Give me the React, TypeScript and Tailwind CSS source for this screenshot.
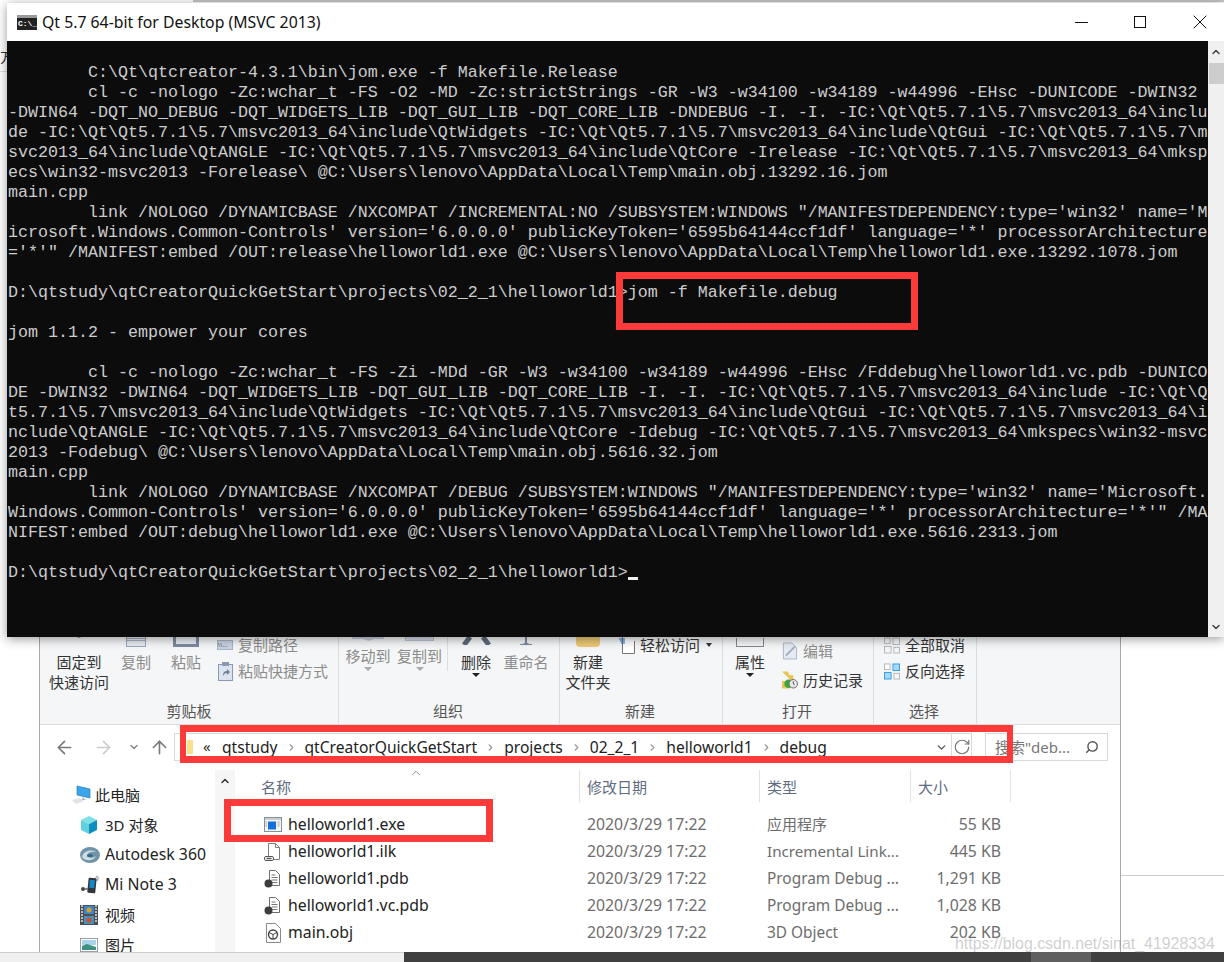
import React from 'react';
import { ChevronDown, ChevronRight, ChevronUp, ArrowLeft, ArrowRight, ArrowUp, RotateCw, Search, Minus, X } from 'lucide-react';

const consoleLines = [
  String.raw`        C:\Qt\qtcreator-4.3.1\bin\jom.exe -f Makefile.Release`,
  String.raw`        cl -c -nologo -Zc:wchar_t -FS -O2 -MD -Zc:strictStrings -GR -W3 -w34100 -w34189 -w44996 -EHsc -DUNICODE -DWIN32`,
  String.raw`-DWIN64 -DQT_NO_DEBUG -DQT_WIDGETS_LIB -DQT_GUI_LIB -DQT_CORE_LIB -DNDEBUG -I. -I. -IC:\Qt\Qt5.7.1\5.7\msvc2013_64\inclu`,
  String.raw`de -IC:\Qt\Qt5.7.1\5.7\msvc2013_64\include\QtWidgets -IC:\Qt\Qt5.7.1\5.7\msvc2013_64\include\QtGui -IC:\Qt\Qt5.7.1\5.7\m`,
  String.raw`svc2013_64\include\QtANGLE -IC:\Qt\Qt5.7.1\5.7\msvc2013_64\include\QtCore -Irelease -IC:\Qt\Qt5.7.1\5.7\msvc2013_64\mksp`,
  String.raw`ecs\win32-msvc2013 -Forelease\ @C:\Users\lenovo\AppData\Local\Temp\main.obj.13292.16.jom`,
  `main.cpp`,
  String.raw`        link /NOLOGO /DYNAMICBASE /NXCOMPAT /INCREMENTAL:NO /SUBSYSTEM:WINDOWS "/MANIFESTDEPENDENCY:type='win32' name='M`,
  String.raw`icrosoft.Windows.Common-Controls' version='6.0.0.0' publicKeyToken='6595b64144ccf1df' language='*' processorArchitecture`,
  String.raw`='*'" /MANIFEST:embed /OUT:release\helloworld1.exe @C:\Users\lenovo\AppData\Local\Temp\helloworld1.exe.13292.1078.jom`,
  ``,
  String.raw`D:\qtstudy\qtCreatorQuickGetStart\projects\02_2_1\helloworld1>jom -f Makefile.debug`,
  ``,
  `jom 1.1.2 - empower your cores`,
  ``,
  String.raw`        cl -c -nologo -Zc:wchar_t -FS -Zi -MDd -GR -W3 -w34100 -w34189 -w44996 -EHsc /Fddebug\helloworld1.vc.pdb -DUNICO`,
  String.raw`DE -DWIN32 -DWIN64 -DQT_WIDGETS_LIB -DQT_GUI_LIB -DQT_CORE_LIB -I. -I. -IC:\Qt\Qt5.7.1\5.7\msvc2013_64\include -IC:\Qt\Q`,
  String.raw`t5.7.1\5.7\msvc2013_64\include\QtWidgets -IC:\Qt\Qt5.7.1\5.7\msvc2013_64\include\QtGui -IC:\Qt\Qt5.7.1\5.7\msvc2013_64\i`,
  String.raw`nclude\QtANGLE -IC:\Qt\Qt5.7.1\5.7\msvc2013_64\include\QtCore -Idebug -IC:\Qt\Qt5.7.1\5.7\msvc2013_64\mkspecs\win32-msvc`,
  String.raw`2013 -Fodebug\ @C:\Users\lenovo\AppData\Local\Temp\main.obj.5616.32.jom`,
  `main.cpp`,
  String.raw`        link /NOLOGO /DYNAMICBASE /NXCOMPAT /DEBUG /SUBSYSTEM:WINDOWS "/MANIFESTDEPENDENCY:type='win32' name='Microsoft.`,
  String.raw`Windows.Common-Controls' version='6.0.0.0' publicKeyToken='6595b64144ccf1df' language='*' processorArchitecture='*'" /MA`,
  String.raw`NIFEST:embed /OUT:debug\helloworld1.exe @C:\Users\lenovo\AppData\Local\Temp\helloworld1.exe.5616.2313.jom`,
  ``,
];

const crumbs = ['qtstudy', 'qtCreatorQuickGetStart', 'projects', '02_2_1', 'helloworld1', 'debug'];

const ExeIcon = () => (
  <svg width="18" height="16" viewBox="0 0 18 16">
    <rect x="0.5" y="0.5" width="17" height="14" fill="#f4f6f8" stroke="#8a8f96" />
    <rect x="1" y="1" width="16" height="2" fill="#c9ced4" />
    <rect x="4" y="4.5" width="8" height="8" fill="#1470d8" />
    <path d="M13.5 5h2M13.5 7h2M13.5 9h2M1.5 5h1.5M1.5 7h1.5M1.5 9h1.5" stroke="#9aa0a8" />
  </svg>
);
const IlkIcon = () => (
  <svg width="18" height="20" viewBox="0 0 18 20">
    <path d="M4.5 1.5h7l4 4v12h-11z" fill="#fff" stroke="#7d7d7d" />
    <path d="M11.5 1.5v4h4" fill="none" stroke="#7d7d7d" />
    <rect x="0.5" y="14.5" width="9" height="4" rx="1.5" fill="#fff" stroke="#555" />
    <path d="M2.5 16.5h5" stroke="#555" strokeWidth="1.5" />
  </svg>
);
const PdbIcon = () => (
  <svg width="18" height="20" viewBox="0 0 18 20">
    <path d="M5.5 1.5h6l4 4v11h-10z" fill="#fff" stroke="#6d6d6d" />
    <path d="M7.5 6h4M7.5 8.5h6M7.5 11h6M7.5 13.5h6" stroke="#777" />
    <circle cx="4.5" cy="14.5" r="4" fill="#3d3d3d" />
  </svg>
);
const ObjIcon = () => (
  <svg width="18" height="20" viewBox="0 0 18 20">
    <path d="M2.5 0.5h9l5 5v14h-14z" fill="#fff" stroke="#8a8a8a" />
    <circle cx="9" cy="11.5" r="4.5" fill="none" stroke="#444" strokeWidth="1.4" />
    <path d="M9 11.5v4M9 11.5l-4-2M9 11.5l4-2" stroke="#444" />
  </svg>
);

const files = [
  { name: 'helloworld1.exe', type: '应用程序', typeSize: 'text-[15px]', size: '55 KB', icon: <ExeIcon /> },
  { name: 'helloworld1.ilk', type: 'Incremental Link...', typeSize: 'text-[15.2px]', size: '445 KB', icon: <IlkIcon /> },
  { name: 'helloworld1.pdb', type: 'Program Debug ...', typeSize: 'text-[15.4px]', size: '1,291 KB', icon: <PdbIcon /> },
  { name: 'helloworld1.vc.pdb', type: 'Program Debug ...', typeSize: 'text-[15.4px]', size: '1,028 KB', icon: <PdbIcon /> },
  { name: 'main.obj', type: '3D Object', typeSize: 'text-[15.4px]', size: '202 KB', icon: <ObjIcon /> },
];

const PcIcon = () => (
  <svg width="20" height="20" viewBox="0 0 20 20">
    <path d="M6 1l13 3v9L6 10z" fill="#3aa6ea" stroke="#2b7fb8" strokeWidth="0.7" />
    <path d="M12 11.5l1 2.5 3 1-5 0z" fill="#9db2c2" />
    <path d="M1 15l8-2 4 3-8 3z" fill="#dfe3e6" />
  </svg>
);
const CubeIcon = () => (
  <svg width="18" height="18" viewBox="0 0 18 18">
    <path d="M9 0l8 4-8 4-8-4z" fill="#7fe0e6" />
    <path d="M1 4l8 4v10l-8-4z" fill="#5fd0dc" />
    <path d="M17 4l-8 4v10l8-4z" fill="#0f8fc0" />
  </svg>
);
const SwirlIcon = () => (
  <svg width="20" height="18" viewBox="0 0 20 18">
    <ellipse cx="10" cy="9" rx="10" ry="8" fill="#6f93a8" />
    <path d="M2 11c1-6 9-8 14-5-4-1-8 0-9 3 0 3 5 4 9 1-2 5-11 6-14 1z" fill="#cfdbe2" />
    <ellipse cx="10" cy="9.5" rx="3" ry="1.6" fill="#2f6a8e" />
  </svg>
);
const PhoneIcon = () => (
  <svg width="20" height="20" viewBox="0 0 20 20">
    <rect x="8" y="3" width="8" height="15" rx="1" transform="rotate(6 12 10)" fill="#30363c" />
    <rect x="9.5" y="5" width="5" height="8" transform="rotate(6 12 10)" fill="#1688c8" />
    <path d="M16 3c0-3 3-2 2 1l-1 2" fill="none" stroke="#8a8a8a" />
    <circle cx="3" cy="14" r="2" fill="#444" />
    <path d="M5 14h3" stroke="#666" strokeWidth="1.5" />
  </svg>
);
const FilmIcon = () => (
  <svg width="18" height="20" viewBox="0 0 18 20">
    <rect width="18" height="20" fill="#4a4f55" />
    <path d="M1 1h2M1 4h2M1 7h2M1 10h2M1 13h2M1 16h2M15 1h2M15 4h2M15 7h2M15 10h2M15 13h2M15 16h2" stroke="#ddd" strokeWidth="1.5" />
    <rect x="4" y="1" width="10" height="8" fill="#3e87c4" />
    <rect x="4" y="11" width="10" height="8" fill="#4a90b0" />
    <circle cx="9" cy="5" r="2.5" fill="#d8a030" />
    <circle cx="9" cy="15" r="2.5" fill="#c8503a" />
  </svg>
);
const PictureIcon = () => (
  <svg width="18" height="14" viewBox="0 0 18 14">
    <rect x="0.5" y="0.5" width="17" height="13" fill="#fff" stroke="#9aa0a6" />
    <rect x="2" y="2" width="14" height="5" fill="#a8d4ea" />
    <path d="M2 8l5-2 9 3v3H2z" fill="#3f8f82" />
  </svg>
);

const navItems = [
  { label: '3D 对象', cls: 'text-[15px]', icon: <CubeIcon /> },
  { label: 'Autodesk 360', cls: 'text-[15.8px]', icon: <SwirlIcon /> },
  { label: 'Mi Note 3', cls: 'text-[15.8px]', icon: <PhoneIcon /> },
  { label: '视频', cls: 'text-[15px]', icon: <FilmIcon /> },
  { label: '图片', cls: 'text-[15px]', icon: <PictureIcon /> },
];

const Group = ({ width, label, labelPad, children }: { width: string; label: string; labelPad?: string; children: React.ReactNode }) => (
  <div className={`${width} h-full shrink-0 flex flex-col border-r border-[#dcdddf]`}>
    <div className="h-[69px] flex">{children}</div>
    <div className={`h-[26px] text-center text-[15px] leading-[26px] text-[#555] ${labelPad ?? ''}`}>{label}</div>
  </div>
);

const BigButton = ({ width, lines, dim, icon, caret }: { width: string; lines: string[]; dim?: boolean; icon?: React.ReactNode; caret?: string }) => (
  <div className={`${width} shrink-0 flex flex-col items-center`}>
    <div className="h-[22px] pb-[5px] w-full flex justify-center items-end">{icon}</div>
    {lines.map(l => (
      <div key={l} className={`h-5 whitespace-nowrap text-[15px] leading-5 ${dim ? 'text-[#8b8b8b]' : 'text-[#333]'}`}>{l}</div>
    ))}
    {caret && <div className={`mt-[1px] h-0 w-0 border-x-[4px] border-t-[4px] border-x-transparent ${caret}`} />}
  </div>
);

const SmallButton = ({ label, dim, icon, caret }: { label: string; dim?: boolean; icon: React.ReactNode; caret?: boolean }) => (
  <div className={`h-5 flex items-center gap-[5px] whitespace-nowrap text-[15px] leading-5 ${dim ? 'text-[#8b8b8b]' : 'text-[#333]'}`}>
    <div className="w-4 flex justify-center">{icon}</div>
    {label}
    {caret && <div className="ml-[1px] h-0 w-0 border-x-[3px] border-t-[4px] border-x-transparent border-t-[#333]" />}
  </div>
);

const Grid4 = ({ on }: { on?: boolean }) => (
  <svg width="17" height="17" viewBox="0 0 17 17">
    <rect x="0.5" y="0.5" width="6" height="6" fill={on ? '#fff' : 'none'} stroke="#b5b5b5" />
    <rect x="9.5" y="0.5" width="7" height="7" fill={on ? '#a8d8f8' : 'none'} stroke={on ? '#2e9be6' : '#b5b5b5'} />
    <rect x="0.5" y="9.5" width="7" height="7" fill={on ? '#a8d8f8' : 'none'} stroke={on ? '#2e9be6' : '#b5b5b5'} />
    <rect x="10.5" y="10.5" width="6" height="6" fill="none" stroke="#b5b5b5" />
  </svg>
);

const Ribbon = () => (
  <div className="h-[95px] shrink-0 flex bg-[#f5f6f7] border-b border-[#dedede] text-[#333]">
    <Group width="w-[299px]" label="剪贴板">
      <BigButton width="w-[78px]" lines={['固定到', '快速访问']} icon={<svg className="mb-[7px]" width="16" height="6"><path d="M2 0l6 3 6-3" fill="none" stroke="#8a8a8a" strokeWidth="2" /></svg>} />
      <BigButton width="w-[36px]" lines={['复制']} dim icon={<div className="w-5 h-[14px] border border-[#9aa8bd] bg-[#e8ecf2]"><div className="mt-[4px] h-[3px] border-y border-[#a7b2c4]" /></div>} />
      <BigButton width="w-[36px] ml-[14px]" lines={['粘贴']} dim icon={<div className="w-[26px] h-[14px] border-x-[3px] border-b-[3px] border-[#7e8ba0] bg-[#e8ecf2]" />} />
      <div className="ml-[13px] pt-[5px] flex flex-col gap-[6px]">
        <SmallButton label="复制路径" dim icon={<div className="w-4 h-[10px] bg-[#c8d3e2] border border-[#a7b4c8] text-[6px] leading-[8px] text-[#556]">\\...</div>} />
        <SmallButton label="粘贴快捷方式" dim icon={<svg width="15" height="19" viewBox="0 0 15 19"><rect x="0.5" y="2.5" width="14" height="16" fill="#dbe3ee" stroke="#8a9ab2" /><rect x="4" y="0" width="7" height="4" fill="#8a9ab2" /><path d="M5 14c0-4 2-5 4-5V7l3 3-3 3v-2c-2 0-3 1-4 3z" fill="#6f7f96" /></svg>} />
      </div>
    </Group>
    <Group width="w-[221px]" label="组织" labelPad="pr-[2px]">
      <div className="w-[109px] shrink-0 flex border-r border-[#dcdddf] h-[41px]">
        <BigButton width="w-[54px] ml-[2px]" lines={['移动到']} dim caret="border-t-[#aaa]" icon={<svg width="32" height="11" viewBox="0 0 32 11"><path d="M0 0h32v9H22l-5 2-6-2H0z" fill="#c3cfde" /></svg>} />
        <BigButton width="w-[49px]" lines={['复制到']} dim caret="border-t-[#aaa]" icon={<div className="w-[29px] h-[11px] bg-[#d3dce8] border border-[#b9c5d6]" />} />
      </div>
      <BigButton width="w-[50px] ml-[3px]" lines={['删除']} caret="border-t-[#222]" icon={<svg className="mb-[2px]" width="31" height="8" viewBox="0 0 31 8"><path d="M3 8l6-8M28 8l-6-8" stroke="#5e6a7c" strokeWidth="5" /></svg>} />
      <BigButton width="w-[44px] ml-[3px]" lines={['重命名']} dim icon={<svg className="mb-[2px]" width="14" height="8" viewBox="0 0 14 8"><path d="M7 0v6M1 8c3 0 6-1 6-3 0 2 3 3 6 3" fill="none" stroke="#7e8ba0" strokeWidth="2" /></svg>} />
    </Group>
    <Group width="w-[163px]" label="新建" labelPad="pr-[2px]">
      <BigButton width="w-[56px]" lines={['新建', '文件夹']} icon={<div className="w-6 h-[11px] bg-[#ecc974] rounded-b-sm" />} />
      <div className="pt-[5px] ml-[3px]">
        <SmallButton label="轻松访问" caret icon={<svg width="16" height="17" viewBox="0 0 16 17"><path d="M3.5 0v16.5h12V4" fill="#fff" stroke="#777" /><path d="M0 2h6M1 4h5M2 6h4" stroke="#1c6fb8" /></svg>} />
      </div>
    </Group>
    <Group width="w-[151px]" label="打开" labelPad="pr-[2px]">
      <BigButton width="w-[54px]" lines={['属性']} caret="border-t-[#222]" icon={<div className="w-7 h-[9px] border-x border-b border-[#888]" />} />
      <div className="pt-[11px] ml-[5px] flex flex-col gap-[9px]">
        <SmallButton label="编辑" dim icon={<svg width="17" height="18" viewBox="0 0 17 18"><path d="M1.5 0.5h9l5 5v12h-14z" fill="#e6ebf3" stroke="#aab6c8" /><path d="M4 14L14 4" stroke="#a0aec2" strokeWidth="2" /></svg>} />
        <SmallButton label="历史记录" icon={<svg width="17" height="18" viewBox="0 0 17 18"><path d="M0 0h6l2 4h4v6H0z M0 0v18h8V8z" fill="#e8c254" /><circle cx="7" cy="13" r="4.5" fill="#3aa53a" /><circle cx="12" cy="13" r="4.5" fill="#e8e8e8" stroke="#666" /><path d="M12 10.5V13l1.5 1" fill="none" stroke="#444" /></svg>} />
      </div>
    </Group>
    <Group width="w-[103px]" label="选择" labelPad="pr-[2px]">
      <div className="pt-[5px] pl-[10px] flex flex-col gap-[6px]">
        <SmallButton label="全部取消" icon={<Grid4 />} />
        <SmallButton label="反向选择" icon={<Grid4 on />} />
      </div>
    </Group>
  </div>
);

const NavBar = () => (
  <div className="h-[45px] shrink-0 flex items-start pt-[8px] bg-white">
    <div className="w-[134px] h-7 shrink-0 flex items-center">
      <ArrowLeft className="ml-[14px] w-[21px] h-[21px] text-[#777]" strokeWidth={1.8} />
      <ArrowRight className="ml-[18px] w-[21px] h-[21px] text-[#ccc]" strokeWidth={1.8} />
      <ChevronDown className="ml-[14px] w-3 h-3 text-[#888]" strokeWidth={3} />
      <ArrowUp className="ml-[9px] w-[21px] h-[21px] text-[#777]" strokeWidth={1.8} />
    </div>
    <div className="w-[798px] h-7 shrink-0 flex items-center border border-[#d9d9d9]">
      <div className="ml-[12px] w-[6px] h-[14px] bg-[#fbe08a]" />
      <div className="ml-[10px] w-[10px] text-[15px] leading-none text-[#333] mb-[2px]">«</div>
      <div className="ml-[9px] mt-[1px] flex items-center text-[15.6px] leading-none text-[#222]">
        {crumbs.map((c, i) => (
          <React.Fragment key={c}>
            {i > 0 && <ChevronRight className="mx-[8px] w-[11px] h-[11px] text-[#999]" strokeWidth={2.5} />}
            <span>{c}</span>
          </React.Fragment>
        ))}
      </div>
      <ChevronDown className="ml-auto w-[13px] h-[13px] text-[#555]" strokeWidth={2.5} />
      <div className="ml-[3px] pl-[1px] h-full flex items-center border-l border-[#d9d9d9]">
        <RotateCw className="w-[18px] h-[18px] text-[#777]" strokeWidth={1.6} />
      </div>
    </div>
    <div className="ml-[13px] w-[123px] h-7 shrink-0 flex items-center border border-[#d9d9d9] pl-[9px] text-[15px] text-[#777] whitespace-nowrap">
      搜索"deb...
      <Search className="ml-auto mr-[8px] w-[14px] h-[14px] -scale-x-100 text-[#555]" strokeWidth={2.4} />
    </div>
  </div>
);

const Sidebar = () => (
  <div className="w-[195px] shrink-0 flex">
    <div className="flex-1 pt-[10px] text-[15px] text-[#222]">
      <div className="h-[30px] pl-[31px] flex items-center gap-[4px]">
        <PcIcon />
        此电脑
      </div>
      {navItems.map(n => (
        <div key={n.label} className={`h-[30px] pl-[40px] flex items-center whitespace-nowrap ${n.cls}`}>
          <div className="w-[25px] flex justify-start">{n.icon}</div>
          {n.label}
        </div>
      ))}
    </div>
    <div className="w-5 bg-[#f6f6f6] flex justify-center pt-[5px]">
      <ChevronUp className="w-3 h-3 text-[#333]" strokeWidth={3} />
    </div>
  </div>
);

const FileList = () => (
  <div className="relative flex-1 min-w-0 text-[15px]">
    <div className="h-[32px] flex text-[#5f6c80]">
      <div className="w-[345px] pl-[26px] pt-[6px] border-r border-[#e2e2e2]">名称</div>
      <div className="w-[180px] pl-[7px] pt-[6px] border-r border-[#e2e2e2]">修改日期</div>
      <div className="w-[151px] pl-[7px] pt-[6px] border-r border-[#e2e2e2]">类型</div>
      <div className="w-[100px] pl-[7px] pt-[6px] border-r border-[#e2e2e2]">大小</div>
    </div>
    <ChevronUp className="absolute left-[174px] top-[-4px] w-[14px] h-[14px] text-[#777]" strokeWidth={1.5} />
    <div className="mt-[9px]">
      {files.map(f => (
        <div key={f.name} className="h-[27px] flex items-center text-[15.8px]">
          <div className="w-[345px] shrink-0 pl-[29px] flex items-center text-[#222]">
            <div className="w-6 flex">{f.icon}</div>
            {f.name}
          </div>
          <div className="w-[180px] shrink-0 pl-[7px] text-[#6d6d6d]">2020/3/29 17:22</div>
          <div className={`w-[151px] shrink-0 pl-[7px] text-[#6d6d6d] whitespace-nowrap ${f.typeSize}`}>{f.type}</div>
          <div className="w-[90px] shrink-0 text-right text-[#6d6d6d]">{f.size}</div>
        </div>
      ))}
    </div>
  </div>
);

const Explorer = () => (
  <div className="absolute left-[39px] top-[630px] w-[1082px] h-[322px] flex flex-col overflow-hidden bg-white border-x border-[#a8a8a8] font-['Noto_Sans','Noto_Sans_CJK_SC',sans-serif]">
    <Ribbon />
    <NavBar />
    <div className="flex flex-1 min-h-0">
      <Sidebar />
      <FileList />
    </div>
  </div>
);

const Terminal = () => (
  <div className="absolute left-[7px] top-[3px] w-[1217px] h-[634px] flex flex-col bg-white shadow-[0_2px_10px_rgba(0,0,0,0.4)]">
    <div className="h-[38px] shrink-0 flex items-center pl-[10px] text-[#111] font-['Noto_Sans','Noto_Sans_CJK_SC',sans-serif]">
      <div className="w-5 h-[15px] bg-[#222] border-t-[3px] border-[#9a9a9a] text-[8px] leading-[12px] text-white font-['Liberation_Mono',monospace] font-bold pl-[1px]">C:\_</div>
      <div className="ml-[5px] mt-[2px] text-[15.8px] leading-none whitespace-nowrap">Qt 5.7 64-bit for Desktop (MSVC 2013)</div>
      <div className="ml-auto flex items-center">
        <Minus className="w-[21px] h-[21px] text-[#111]" strokeWidth={1.2} />
        <div className="ml-[42px] w-3 h-3 border border-[#111]" />
        <X className="ml-[42px] mr-[12px] w-6 h-6 text-[#111]" strokeWidth={1} />
      </div>
    </div>
    <div className="flex-1 min-h-0 flex">
      <div className="flex-1 min-w-0 bg-[#0c0c0c] pl-[1px] pt-[22px] text-[#cccccc] font-['Liberation_Mono',monospace] text-[16.667px] leading-5 whitespace-pre overflow-hidden">
        {consoleLines.map((l, i) => (
          <div key={i} className="h-5">{l}</div>
        ))}
        <div className="h-5 relative">
          {String.raw`D:\qtstudy\qtCreatorQuickGetStart\projects\02_2_1\helloworld1>`}
          <span className="inline-block w-[10px] h-[3px] bg-[#eeeeee] align-[-3px]" />
        </div>
      </div>
      <div className="w-4 shrink-0 bg-[#f0f0f0] flex flex-col items-center">
        <ChevronUp className="mt-[5px] w-3 h-3 text-[#444]" strokeWidth={3} />
        <div className="mt-[5px] w-[15px] h-[21px] bg-[#cdcdcd]" />
        <ChevronDown className="mt-auto mb-[4px] w-3 h-3 text-[#444]" strokeWidth={3} />
      </div>
    </div>
  </div>
);

export default function App() {
  return (
    <div className="relative w-[1224px] h-[962px] overflow-hidden bg-white">
      {/* stuff peeking out behind the two windows */}
      <div className="absolute left-[193px] top-0 right-0 h-[2px] bg-[#c4c4c4]" />
      <div className="absolute left-0 top-[71px] w-[7px] h-px bg-[#dddddd]" />
      <div className="absolute left-0 top-[46px] w-[7px] overflow-hidden text-[15px] leading-5 text-[#333] font-['Noto_Sans_CJK_SC',sans-serif]">方</div>
      <div className="absolute left-[1120px] top-[875px] right-0 h-px bg-[#cccccc]" />

      <Explorer />
      <Terminal />

      {/* bottom strip */}
      <div className="absolute left-0 top-[952px] w-[404px] h-[10px] bg-[#f0f0f0] border-t border-[#cfcfcf]" />
      <div className="absolute left-[404px] top-[952px] right-0 h-[10px] bg-[#404040]">
        <div className="ml-[627px] w-[60px] h-full bg-[#5f5f5f]" />
      </div>

      {/* markup drawn on top */}
      <div className="absolute left-[616px] top-[272px] w-[302px] h-[58px] border-[7px] border-[#fb3a3a]" />
      <div className="absolute left-[180px] top-[725px] w-[833px] h-[38px] border-x-[6px] border-y-[7px] border-[#fb3a3a]" />
      <div className="absolute left-[224px] top-[799px] w-[269px] h-[43px] border-[7px] border-[#fb3a3a]" />

      <div className="absolute left-[955px] top-[934px] text-[15.9px] leading-5 whitespace-nowrap text-[#a0a0a0]/50 font-['Liberation_Sans',sans-serif]">
        https://blog.csdn.net/sinat_41928334
      </div>
    </div>
  );
}
